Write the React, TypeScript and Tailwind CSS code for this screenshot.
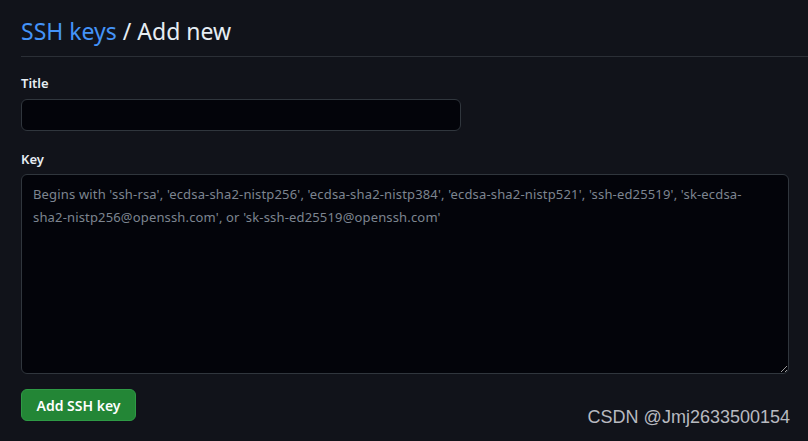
import React from 'react';

const App = () => {
  return (
    <div
      className="relative w-[808px] h-[441px] overflow-hidden bg-[#11131a] px-[21px]"
      style={{ fontFamily: '"Noto Sans", "Liberation Sans", sans-serif' }}
    >
      {/* Header */}
      <div className="pt-[15px] pb-[9px] border-b border-[#2b2f36] mr-[-21px]">
        <h2 className="text-[23px] leading-[32px] text-[#e6edf3] font-normal">
          <span className="text-[#4493f8]">SSH keys</span> / Add new
        </h2>
      </div>

      {/* Form */}
      <form className="pt-[16px]">
        <div className="flex flex-col">
          <label className="text-[13px] leading-[20px] font-semibold text-[#e6edf3]">Title</label>
          <input
            type="text"
            className="mt-[6px] w-[440px] h-[32px] rounded-[6px] border border-[#30363d] bg-[#03040a] px-3 text-[14px] text-[#e6edf3] outline-none"
          />
        </div>

        <div className="flex flex-col mt-[18px]">
          <label className="text-[13px] leading-[20px] font-semibold text-[#e6edf3]">Key</label>
          <textarea
            className="mt-[5px] w-[768px] h-[200px] rounded-[6px] border border-[#30363d] bg-[#03040a] pl-[11px] pr-[26px] pt-[8px] pb-[9px] text-[13px] tracking-[0.16px] leading-[23px] text-[#e6edf3] placeholder:text-[#7d8590] outline-none"
            placeholder="Begins with 'ssh-rsa', 'ecdsa-sha2-nistp256', 'ecdsa-sha2-nistp384', 'ecdsa-sha2-nistp521', 'ssh-ed25519', 'sk-ecdsa-sha2-nistp256@openssh.com', or 'sk-ssh-ed25519@openssh.com'"
          />
        </div>

        <button
          type="button"
          className="mt-[15px] h-[32px] w-[115px] rounded-[6px] border border-[#2e9a45] bg-[#238636] text-[14px] font-semibold text-white"
        >
          Add SSH key
        </button>
      </form>

      {/* Watermark */}
      <div
        className="absolute right-[18px] bottom-[10px] text-[18px] text-[#b8bac0]"
        style={{ fontFamily: '"Liberation Sans", sans-serif' }}
      >
        CSDN @Jmj2633500154
      </div>
    </div>
  );
};

export default App;
